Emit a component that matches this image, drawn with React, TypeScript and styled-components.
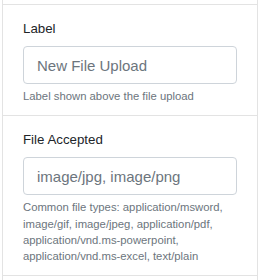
import React from 'react';
import styled, { createGlobalStyle } from 'styled-components';

const GlobalStyle = createGlobalStyle`
  html, body {
    margin: 0;
    padding: 0;
    background: #fff;
  }
  body {
    font-family: "Liberation Sans", Arial, sans-serif;
    color: #212529;
  }
`;

function App() {
  return (
    <>
      <GlobalStyle />
      <StyledPanel>
        <div className='panel-tail' />
        {/* Label setting */}
        <StyledField>
          <label htmlFor='field-label'>Label</label>
          <input id='field-label' type='text' placeholder='New File Upload' />
          <small>Label shown above the file upload</small>
        </StyledField>
        {/* Accepted types */}
        <StyledField last>
          <label htmlFor='field-accept'>File Accepted</label>
          <input id='field-accept' type='text' placeholder='image/jpg, image/png' />
          <small>
            Common file types: application/msword, image/gif, image/jpeg,
            application/pdf, application/vnd.ms-powerpoint,
            application/vnd.ms-excel, text/plain
          </small>
        </StyledField>
        <div className='panel-tail' />
      </StyledPanel>
    </>
  );
}

const StyledPanel = styled.div`
  margin: 0 3px 0 2px;
  min-height: 280px;
  border-left: 1px solid #e3e3e3;
  border-right: 1px solid #e3e3e3;
  box-sizing: border-box;

  .panel-tail {
    height: 4px;
  }
`;

const StyledField = styled.div<{ last?: boolean }>`
  display: flex;
  flex-direction: column;
  padding: 14px 20px 11px 20px;
  border-top: 1px solid #e3e3e3;
  border-bottom: ${(p) => (p.last ? '1px solid #e3e3e3' : 'none')};

  label {
    font-size: 13.3px;
    line-height: 20px;
    color: #212529;
    margin-bottom: 7px;
  }

  input {
    box-sizing: border-box;
    width: 100%;
    height: 38px;
    padding: 0 13px;
    font-family: "Liberation Sans", Arial, sans-serif;
    font-size: 15px;
    color: #495057;
    border: 1px solid #ced4da;
    border-radius: 4px;
    outline: none;
    background: #fff;

    &::placeholder {
      color: #6c757d;
    }
  }

  small {
    margin-top: 4px;
    font-size: 11.3px;
    line-height: 16.3px;
    color: #6c757d;
  }
`;

export default App;
